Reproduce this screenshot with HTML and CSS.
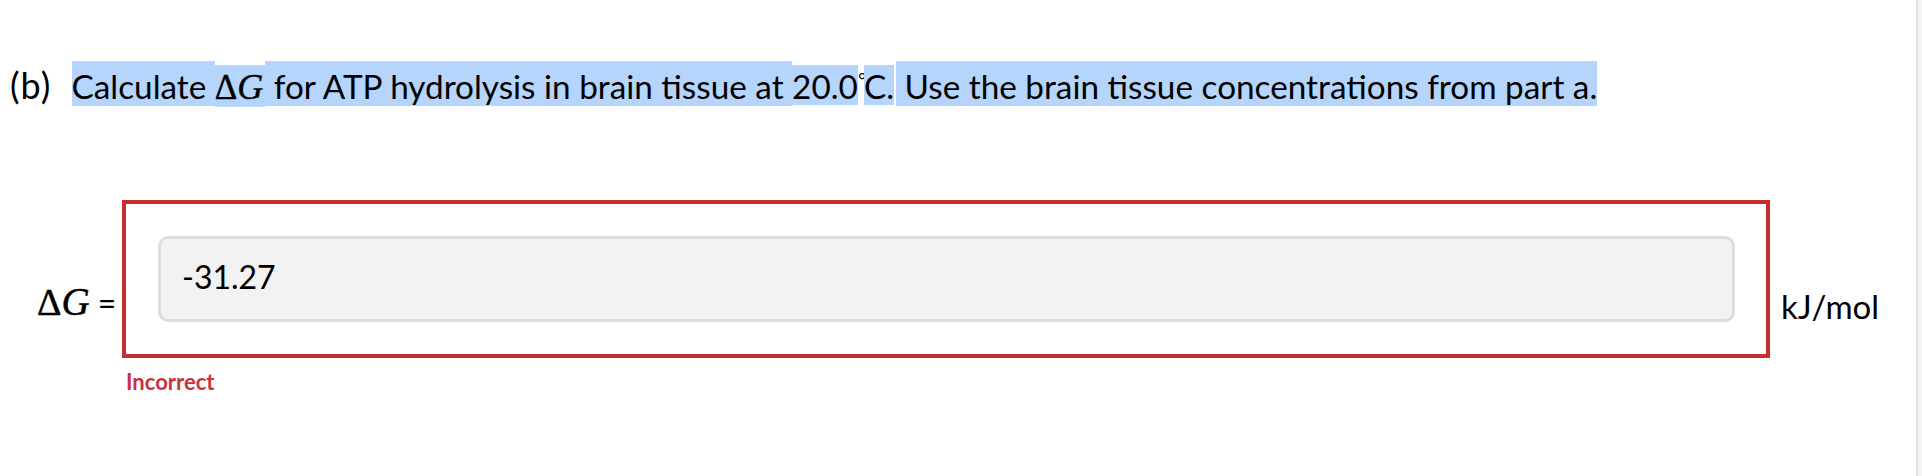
FILE: index.html
```html
<!DOCTYPE html>
<html lang="en">
<head>
<meta charset="utf-8">
<title>Question (b)</title>
<link rel="stylesheet" href="styles.css">
</head>
<body>
<div class="app">
  <main class="content">
    <p class="question"><span class="part">(b)&nbsp;</span><span class="hl">Calculate&nbsp;</span><span class="hl hl-math"><span class="delta">Δ</span><i class="var">G</i></span><span class="hl">&nbsp;for ATP hydrolysis in brain tissue at&nbsp;</span><span class="hl hl-short">20.0</span><span class="deg">°</span><span class="hl hl-short">C.</span><span class="gap"></span><span class="hl">&nbsp;Use the brain tissue concentrations from part a.</span></p>
    <div class="answer-row">
      <div class="label"><span class="delta-lg">Δ</span><i class="var-lg">G</i><span class="eq"> =</span></div>
      <div class="field">
        <div class="frame">
          <div class="input">-31.27</div>
        </div>
        <div class="feedback">Incorrect</div>
      </div>
      <div class="unit">kJ/mol</div>
    </div>
  </main>
  <div class="scrollbar"></div>
</div>
</body>
</html>
```
FILE: styles.css
```css
html, body {
  margin: 0;
  padding: 0;
  background: #ffffff;
}

body {
  font-family: "Lato", "Noto Sans", sans-serif;
  color: #000000;
}

.app {
  display: flex;
  width: 1922px;
  height: 476px;
}

.content {
  flex: 1;
  padding: 60px 0 0 10px;
}

.scrollbar {
  width: 4px;
  border-left: 2px solid #e2e2e2;
  background: #f5f5f5;
}

.question {
  margin: 0;
  font-size: 33.3px;
  white-space: nowrap;
  height: 45px;
}

.part {
  display: inline-block;
  line-height: 39px;
  padding-top: 6px;
  padding-right: 10px;
  font-size: 36px;
  letter-spacing: 1px;
}

.hl {
  display: inline-block;
  background: #b5d5fc;
  line-height: 39px;
  padding-top: 6px;
}

.hl-math {
  padding-top: 2px;
  line-height: 38px;
}

.hl-short {
  padding-top: 2px;
  line-height: 38px;
}

.delta {
  font-family: "Liberation Serif", serif;
  font-size: 35px;
  -webkit-text-stroke: 0.4px #000;
}

.var {
  font-family: "Liberation Serif", serif;
  font-size: 36px;
  font-style: italic;
  padding-right: 2px;
  -webkit-text-stroke: 0.4px #000;
}

.deg {
  display: inline-block;
  font-size: 20px;
  vertical-align: 12px;
  width: 6px;
  line-height: 20px;
}

.gap {
  display: inline-block;
  width: 2px;
}

.answer-row {
  display: flex;
  align-items: flex-start;
  margin-top: 95px;
}

.label {
  width: 85px;
  padding-left: 27px;
  margin-top: 82px;
  line-height: 40px;
  white-space: nowrap;
}

.delta-lg {
  font-family: "Liberation Serif", serif;
  font-size: 38px;
  -webkit-text-stroke: 0.5px #000;
}

.var-lg {
  font-family: "Liberation Serif", serif;
  font-size: 39px;
  font-style: italic;
  -webkit-text-stroke: 0.5px #000;
}

.eq {
  font-size: 32px;
}

.field {
  flex: 0 0 1648px;
}

.frame {
  box-sizing: border-box;
  height: 158px;
  border: 4px solid #c62f2f;
  padding: 32px 31px 32px 32px;
}

.input {
  box-sizing: border-box;
  height: 86px;
  border: 3px solid #dddddd;
  border-radius: 10px;
  background: #f2f2f2;
  padding: 0 20px 6px 21px;
  font-size: 32px;
  display: flex;
  align-items: center;
}

.feedback {
  margin-top: 10px;
  padding-left: 4px;
  color: #c8323a;
  font-weight: 700;
  font-size: 22px;
}

.unit {
  margin-left: 11px;
  margin-top: 86px;
  font-size: 33px;
  line-height: 40px;
}
```
